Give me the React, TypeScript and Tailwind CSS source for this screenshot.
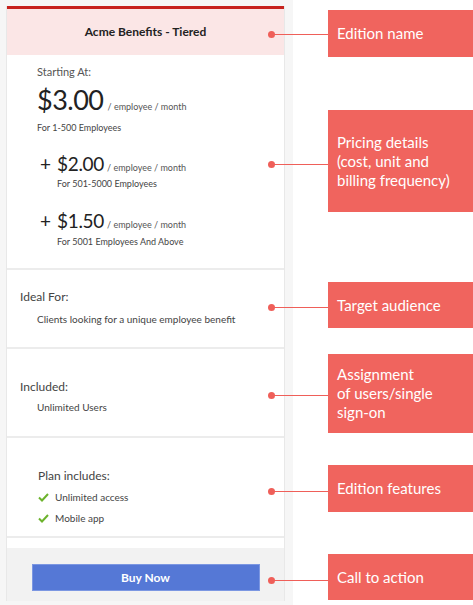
import React from "react";

const Check = () => (
  <svg width="11" height="9" viewBox="0 0 11 9" className="shrink-0">
    <path d="M1 4.5 L4 7.5 L10 1" fill="none" stroke="#6cb32c" strokeWidth="2" />
  </svg>
);

const notes = [
  { dot: 34, top: 10, h: 47, text: ["Edition name"] },
  { dot: 164, top: 110, h: 102, text: ["Pricing details", "(cost, unit and", "billing frequency)"] },
  { dot: 307, top: 282, h: 46, text: ["Target audience"] },
  { dot: 395, top: 354, h: 79, text: ["Assignment", "of users/single", "sign-on"] },
  { dot: 491, top: 465, h: 47, text: ["Edition features"] },
  { dot: 580, top: 554, h: 46, text: ["Call to action"] },
];

export default function App() {
  return (
    <div
      className="relative flex w-[473px] h-[605px] bg-white overflow-hidden"
      style={{ fontFamily: "Lato, 'Noto Sans', sans-serif" }}
    >
      <div className="w-[293px] h-full bg-[#f6f6f6] pl-[6px] pr-[8px] pt-[6px] pb-[4px]">
        <div className="h-full bg-white flex flex-col border-x border-[#e8e8e8]">
          <div className="h-[3px] bg-[#c6221d]" />
          <div className="h-[46px] bg-[#fbe6e6] flex items-center justify-center text-[12px] font-bold text-[#222]">
            Acme Benefits - Tiered
          </div>
          <div className="h-[213px] pl-[30px] pt-[10px] text-[#333]">
            <div className="text-[11px] text-[#555] leading-[14px]">Starting At:</div>
            <div className="flex items-baseline mt-[7px] h-[28px]">
              <span className="text-[27px] leading-[28px] text-[#222] tracking-[-0.5px]">$3.00</span>
              <span className="text-[9px] text-[#555] ml-[4px]">/ employee / month</span>
            </div>
            <div className="text-[9px] text-[#444] mt-[8px] leading-[12px]">For 1-500 Employees</div>
            <div className="flex items-baseline mt-[20px] pl-[3px] h-[20px]">
              <span className="text-[19px] leading-[20px] text-[#222] w-[17px]">+</span>
              <span className="text-[19px] leading-[20px] text-[#222] tracking-[-0.3px]">$2.00</span>
              <span className="text-[9px] text-[#555] ml-[3px]">/ employee / month</span>
            </div>
            <div className="text-[9px] text-[#444] mt-[4px] pl-[20px] leading-[12px]">For 501-5000 Employees</div>
            <div className="flex items-baseline mt-[21px] pl-[3px] h-[20px]">
              <span className="text-[19px] leading-[20px] text-[#222] w-[17px]">+</span>
              <span className="text-[19px] leading-[20px] text-[#222] tracking-[-0.3px]">$1.50</span>
              <span className="text-[9px] text-[#555] ml-[3px]">/ employee / month</span>
            </div>
            <div className="text-[9px] text-[#444] mt-[5px] pl-[20px] leading-[12px]">For 5001 Employees And Above</div>
          </div>
          <div className="h-[79px] border-t-2 border-[#ececec] pl-[13px] pt-[19px]">
            <div className="text-[12px] text-[#444] leading-[16px]">Ideal For:</div>
            <div className="text-[10px] text-[#444] pl-[17px] mt-[8px] leading-[13px]">
              Clients looking for a unique employee benefit
            </div>
          </div>
          <div className="h-[89px] border-t-2 border-[#ececec] pl-[13px] pt-[30px]">
            <div className="text-[12px] text-[#444] leading-[16px]">Included:</div>
            <div className="text-[10px] text-[#444] pl-[17px] mt-[6px] leading-[13px]">Unlimited Users</div>
          </div>
          <div className="h-[100px] border-t-2 border-[#ececec] pl-[31px] pt-[30px]">
            <div className="text-[12px] text-[#444] leading-[16px]">Plan includes:</div>
            <div className="flex items-center gap-[6px] mt-[3px] h-[20px]">
              <Check />
              <span className="text-[10px] text-[#444]">Unlimited access</span>
            </div>
            <div className="flex items-center gap-[6px] mt-[1px] h-[20px]">
              <Check />
              <span className="text-[10px] text-[#444]">Mobile app</span>
            </div>
          </div>
          <div className="h-[12px] border-t-2 border-[#ececec]" />
          <div className="flex-1 bg-[#f2f2f2] flex items-center justify-center pt-[6px]">
            <div className="w-[228px] h-[27px] bg-[#5578d6] border border-[#7c97e2] flex items-center justify-center text-white text-[12px] font-bold">
              Buy Now
            </div>
          </div>
        </div>
      </div>

      {notes.map((n, i) => (
        <React.Fragment key={i}>
          <div
            className="absolute left-[268px] w-[7px] h-[7px] rounded-full bg-[#ef5f59]"
            style={{ top: n.dot - 3.5 }}
          />
          <div className="absolute left-[272px] w-[56px] h-px bg-[#ef5f59]" style={{ top: n.dot - 0.5 }} />
          <div
            className="absolute left-[328px] w-[145px] bg-[#f0645e] text-white text-[15px] leading-[19px] pl-[9px] flex flex-col justify-center"
            style={{ top: n.top, height: n.h }}
          >
            {n.text.map((t, j) => (
              <div key={j}>{t}</div>
            ))}
          </div>
        </React.Fragment>
      ))}
    </div>
  );
}
